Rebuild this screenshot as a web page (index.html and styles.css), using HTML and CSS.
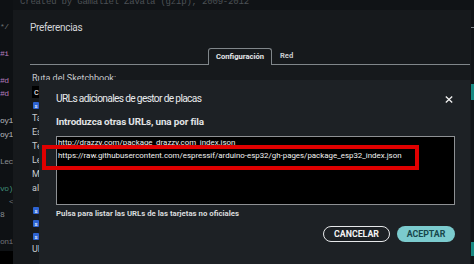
FILE: index.html
```html
<!DOCTYPE html>
<html lang="es">
<head>
<meta charset="utf-8">
<title>Preferencias</title>
<link rel="stylesheet" href="styles.css">
</head>
<body>
<div class="editor">
  <div class="gutter">
    <div class="ln c-gray">*/</div>
    <div class="ln"></div>
    <div class="ln c-pink">#i</div>
    <div class="ln"></div>
    <div class="ln c-pink">#d</div>
    <div class="ln c-pink">#d</div>
    <div class="ln"></div>
    <div class="ln c-light">oy1</div>
    <div class="ln c-light">oy1</div>
    <div class="ln"></div>
    <div class="ln c-mid">Lec</div>
    <div class="ln"></div>
    <div class="ln c-green">vo)</div>
    <div class="ln c-gray lt">&lt;</div>
    <div class="ln c-mid">8</div>
    <div class="ln"></div>
    <div class="ln c-gray">onit</div>
    <div class="ln blk"></div>
  </div>
  <div class="main">
    <div class="code-top">Created by Gamaliel Zavala (gzip), 2009-2012</div>
  </div>
  <div class="rightbar">
    <div class="dash"></div>
    <div class="teal t1"></div>
    <div class="teal t2"></div>
  </div>
</div>

<section class="prefs">
  <h1 class="prefs-title">Preferencias</h1>
  <div class="tabs">
    <div class="tab active">Configuración</div>
    <div class="tab">Red</div>
  </div>
  <div class="prefs-body">
    <div class="label">Ruta del Sketchbook:</div>
    <div class="input">c:\Users\Documents\Arduino</div>
    <div class="check"><span class="box">s</span></div>
    <div class="row first-row">Tamaño de letra del editor:</div>
    <div class="row">Escala de la interfaz:</div>
    <div class="row">Tema:</div>
    <div class="row">Lenguaje del editor:</div>
    <div class="row">Mostrar salida detallada durante</div>
    <div class="row">al compilar</div>
    <div class="check c1"><span class="box">s</span></div>
    <div class="check c2"><span class="box">s</span></div>
    <div class="check c2"><span class="box">s</span></div>
    <div class="row r-last">URLs adicionales de gestor de placas:</div>
  </div>
</section>

<div class="modal">
  <div class="modal-head">
    <h2 class="modal-title">URLs adicionales de gestor de placas</h2>
    <svg class="close" width="8" height="7" viewBox="0 0 8 7"><path d="M0.8 0.5 L7.2 6.5 M7.2 0.5 L0.8 6.5" stroke="#f2f2f2" stroke-width="1.3" fill="none"/></svg>
  </div>
  <p class="intro">Introduzca otras URLs, una por fila</p>
  <div class="urls">
    <div class="url first">http://drazzy.com/package_drazzy.com_index.json</div>
    <div class="url">https://raw.githubusercontent.com/espressif/arduino-esp32/gh-pages/package_esp32_index.json</div>
  </div>
  <p class="hint">Pulsa para listar las URLs de las tarjetas no oficiales</p>
  <div class="actions">
    <button class="btn cancel">CANCELAR</button>
    <button class="btn ok">ACEPTAR</button>
  </div>
</div>

<div class="annot"></div>
</body>
</html>
```

FILE: styles.css
```css
html, body {
  margin: 0;
  padding: 0;
}
body {
  width: 474px;
  height: 264px;
  overflow: hidden;
  position: relative;
  background: #101316;
  font-family: "Roboto", "Liberation Sans", sans-serif;
}

/* background editor */
.editor {
  display: grid;
  grid-template-columns: 13px 1fr 3px;
  height: 264px;
}
.gutter {
  padding-top: 20.3px;
  font-family: "Liberation Mono", monospace;
  font-size: 8px;
  letter-spacing: -0.6px;
  overflow: hidden;
  background: #0e1114;
}
.ln {
  height: 13.45px;
  line-height: 13.45px;
  white-space: nowrap;
}
.lt { padding-left: 9px; }
.c-gray { color: #6e7377; }
.c-pink { color: #b27cbc; }
.c-light { color: #b9bcbf; }
.c-mid { color: #8a8e92; }
.c-green { color: #3f8f78; }
.blk { background: #000; height: 20px; margin-top: 2px; }

.main {
  padding-left: 7px;
  overflow: hidden;
}
.code-top {
  margin-top: -3.5px;
  font-family: "Liberation Mono", monospace;
  font-size: 9px;
  line-height: 10px;
  letter-spacing: -0.2px;
  color: #4c5155;
  white-space: nowrap;
}
.rightbar {
  display: flex;
  flex-direction: column;
}
.dash {
  margin-top: 27px;
  width: 3px;
  height: 1px;
  background: #80868a;
}
.teal { background: #178a83; width: 3px; }
.t1 { margin-top: 56px; height: 16px; }
.t2 { margin-top: 142px; height: 14px; }

/* preferences dialog */
.prefs {
  position: absolute;
  left: 13px;
  top: 10px;
  width: 458px;
  bottom: 0;
  box-sizing: border-box;
  padding: 11.2px 1px 0 17px;
  background: #16191c;
}
.prefs-title {
  margin: 0;
  font-size: 10px;
  line-height: 14px;
  letter-spacing: -0.3px;
  font-weight: normal;
  color: #d4d6d8;
}
.tabs {
  margin-top: 12.8px;
  display: flex;
  align-items: flex-end;
  padding-left: 178px;
  border-bottom: 1px solid #80868a;
  height: 16px;
}
.tab {
  height: 16px;
  line-height: 16px;
  font-size: 7.6px;
  font-weight: bold;
  color: #c9cbcd;
  padding: 0 8px;
  box-sizing: border-box;
}
.tab.active {
  border: 1px solid #80868a;
  border-bottom: none;
  border-radius: 3px 3px 0 0;
  background: #16191c;
  margin-bottom: -1px;
  height: 17px;
  line-height: 15px;
  padding: 0 7px;
  color: #e4e6e8;
}
.prefs-body {
  padding-left: 2px;
  font-size: 9px;
  color: #c8cacc;
}
.label {
  margin-top: 6.7px;
  line-height: 12px;
}
.input {
  margin-top: 2.3px;
  height: 12px;
  line-height: 12px;
  width: 300px;
  background: #000;
  color: #eee;
  padding-left: 2px;
  white-space: nowrap;
}
.check {
  margin-top: 4px;
  height: 7px;
  display: flex;
}
.check.c1 { margin-top: 12px; }
.check.c2 { margin-top: 6px; }
.box {
  margin-left: 1px;
  width: 6px;
  height: 7px;
  border-radius: 1px;
  background: #2d63d2;
  color: #fff;
  font-size: 6px;
  line-height: 7px;
  text-align: center;
}
.row {
  height: 14px;
  line-height: 14px;
  white-space: nowrap;
}
.first-row, .r-last { margin-top: 2px; }

/* modal */
.modal {
  position: absolute;
  left: 39px;
  top: 80px;
  width: 431px;
  height: 200px;
  box-sizing: border-box;
  padding: 12px 15px 0 17px;
  background: #1d2125;
}
.modal-head {
  display: flex;
  justify-content: space-between;
  align-items: center;
  height: 14px;
}
.modal-title {
  margin: 0;
  font-size: 10.2px;
  line-height: 14px;
  letter-spacing: -0.66px;
  font-weight: normal;
  color: #e8eaec;
}
.close {
  margin-right: 2px;
  display: block;
}
.intro {
  margin: 9.5px 0 0;
  font-size: 9.9px;
  line-height: 11px;
  letter-spacing: -0.15px;
  font-weight: bold;
  color: #e2e4e6;
}
.urls {
  margin-top: 9.5px;
  height: 69px;
  box-sizing: border-box;
  border: 1px solid #8e9194;
  background: #000;
  padding-left: 1px;
  overflow: hidden;
  font-size: 7.9px;
  line-height: 13px;
  color: #f2f2f2;
}
.url { white-space: nowrap; }
.url.first { margin-top: -1.5px; }
.hint {
  margin: 2.5px 0 0;
  font-size: 7.8px;
  line-height: 11px;
  font-weight: bold;
  color: #d9dbdd;
}
.actions {
  margin-top: 7.5px;
  display: flex;
  justify-content: flex-end;
  gap: 7px;
}
.btn {
  height: 16px;
  border-radius: 8px;
  font-family: "Roboto", "Liberation Sans", sans-serif;
  font-size: 8.8px;
  font-weight: bold;
  padding: 0;
  box-sizing: border-box;
  line-height: 14px;
}
.cancel {
  width: 67px;
  background: transparent;
  border: 1.3px solid #e6e8ea;
  color: #f4f4f4;
}
.ok {
  width: 58px;
  background: #7bcbce;
  border: none;
  color: #17474b;
}

/* annotation highlight */
.annot {
  position: absolute;
  left: 42px;
  top: 145px;
  width: 377px;
  height: 25px;
  box-sizing: border-box;
  border: 4px solid #e00000;
}
```
